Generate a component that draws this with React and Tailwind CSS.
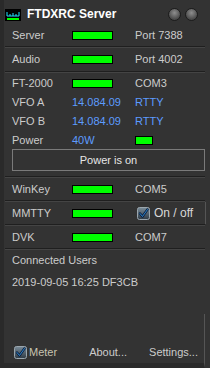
import React from "react";

const Bar = () => (
  <div className="w-[41px] h-[9px] bg-[#00ff00] border border-black" />
);

const Sep = () => (
  <div className="h-[2px] ml-[1px] mr-[5px] border-t border-[#1f1f1f] border-b border-b-[#444444]" />
);

const Check = () => (
  <svg width="13" height="13" viewBox="0 0 13 13">
    <defs>
      <linearGradient id="cb" x1="0" y1="0" x2="0" y2="1">
        <stop offset="0" stopColor="#7a8c99" />
        <stop offset="1" stopColor="#2e3a44" />
      </linearGradient>
    </defs>
    <rect x="0.5" y="0.5" width="12" height="12" rx="2" fill="url(#cb)" stroke="#9aa6ae" />
    <path d="M3 6.5 L5.5 9.5 L10.5 2.5" fill="none" stroke="#0a1e40" strokeWidth="2.4" strokeLinecap="round" strokeLinejoin="round" />
    <path d="M3 6.5 L5.5 9.5 L10.5 2.5" fill="none" stroke="#3aa0e8" strokeWidth="0.8" strokeLinecap="round" strokeLinejoin="round" />
  </svg>
);

const Row = ({ h, label, mid, right, blue }) => (
  <div className={`flex items-center ${h}`}>
    <div className="w-[68px] pl-[8px]">{label}</div>
    <div className="w-[63px]">{mid}</div>
    <div className={blue ? "text-[#5d9cff]" : ""}>{right}</div>
  </div>
);

const Knob = () => (
  <div className="w-[13px] h-[13px] rounded-full border border-[#1c1c1c] bg-[radial-gradient(circle_at_50%_35%,#8e8e8e,#4a4a4a_70%)]" />
);

export default function App() {
  return (
    <div
      className="w-[210px] h-[368px] bg-[#333333] flex flex-col text-[11px] text-[#cccccc] leading-none overflow-hidden border-l-[4px] border-[#2a2a2a]"
      style={{ fontFamily: '"Liberation Sans", Arial, sans-serif' }}
    >
      <div className="h-[24px] flex items-center pl-[1px] pr-[12px]">
        <svg width="16" height="12" viewBox="0 0 16 12" className="mr-[6px] mt-[5px]">
          <rect width="16" height="12" fill="#000" />
          <path d="M2 3 V7 H14 V3 M5 5 V7 M8 4 V7 M11 5 V7" fill="none" stroke="#20e0ff" strokeWidth="1" />
          <rect x="2" y="9" width="12" height="2" fill="#00ff00" />
        </svg>
        <div className="font-bold text-white text-[12px] mt-[4px]">FTDXRC Server</div>
        <div className="ml-auto flex gap-[4px] mt-[5px]">
          <Knob />
          <Knob />
        </div>
      </div>
      <Row h="h-[22px]" label="Server" mid={<Bar />} right="Port 7388" />
      <Sep />
      <Row h="h-[23px]" label="Audio" mid={<Bar />} right="Port 4002" />
      <Sep />
      <Row h="h-[20px]" label="FT-2000" mid={<Bar />} right="COM3" />
      <Row h="h-[19px]" label="VFO A" mid={<span className="text-[#5d9cff]">14.084.09</span>} right="RTTY" blue />
      <Row h="h-[19px]" label="VFO B" mid={<span className="text-[#5d9cff]">14.084.09</span>} right="RTTY" blue />
      <Row h="h-[18px]" label="Power" mid={<span className="text-[#5d9cff]">40W</span>} right={<div className="w-[18px] h-[9px] bg-[#00ff00] border border-black" />} />
      <div className="h-[22px] ml-[8px] mr-[5px] border border-[#7a7a7a] flex items-center justify-center text-[#e6e6e6]">
        Power is on
      </div>
      <div className="h-[5px]" />
      <Sep />
      <Row h="h-[22px]" label="WinKey" mid={<Bar />} right="COM5" />
      <Sep />
      <div className="flex items-center h-[22px] mr-[4px]">
        <div className="w-[68px] pl-[8px]">MMTTY</div>
        <div className="w-[65px]"><Bar /></div>
        <div className="flex items-center gap-[4px] flex-1 self-stretch border-r border-[#555555]">
          <Check />
          <span className="text-[#d8d8d8] text-[12px]">On / off</span>
        </div>
      </div>
      <Sep />
      <Row h="h-[22px]" label="DVK" mid={<Bar />} right="COM7" />
      <Sep />
      <div className="h-[20px] flex items-center pl-[8px]">Connected Users</div>
      <div className="h-[24px] flex items-center pl-[8px]">2019-09-05 16:25 DF3CB</div>
      <div className="flex-1 flex flex-col justify-end mt-[20px] mr-[5px] border-r border-[#555555] border-b-[5px] border-b-[#2a2a2a]">
        <div className="flex items-center h-[20px] mb-[1px]">
          <div className="pl-[10px] flex items-center gap-[2px]">
            <Check />
            <span className="text-[#c8c4b0]">Meter</span>
          </div>
          <span className="ml-[32px]">About...</span>
          <span className="ml-[22px]">Settings...</span>
        </div>
      </div>
    </div>
  );
}
